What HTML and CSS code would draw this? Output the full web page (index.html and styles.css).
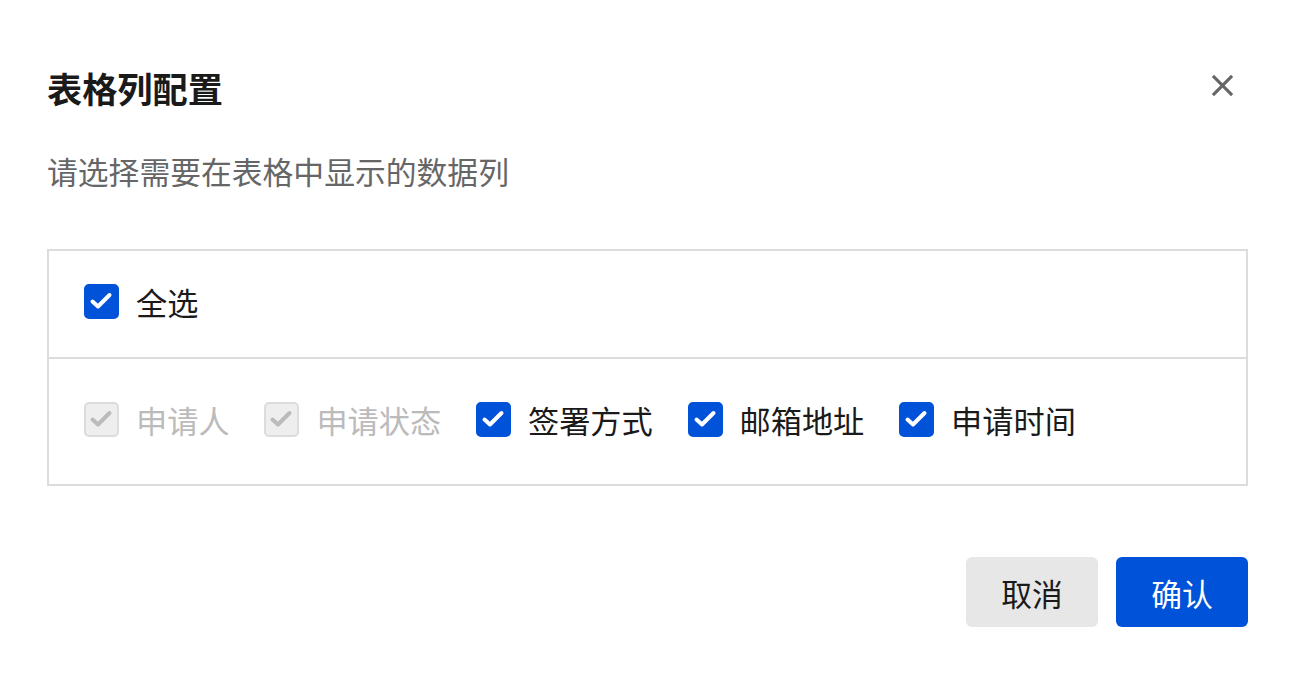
FILE: index.html
```html
<!DOCTYPE html>
<html lang="zh-CN">
<head>
<meta charset="utf-8">
<title>表格列配置</title>
<link rel="stylesheet" href="styles.css">
</head>
<body>
<div class="dialog">
  <div class="header">
    <div class="title">表格列配置</div>
    <button class="close" aria-label="关闭">
      <svg viewBox="0 0 24 24" width="24" height="24"><path d="M2 2 L22 22 M22 2 L2 22" stroke="#666666" stroke-width="3.2" fill="none"/></svg>
    </button>
  </div>
  <div class="desc">请选择需要在表格中显示的数据列</div>
  <div class="panel">
    <div class="row row-all">
      <label class="item">
        <span class="box checked"><svg viewBox="0 0 35 35"><path d="M8.5 17.5 L14 22.5 L25.5 11" /></svg></span>
        <span class="label">全选</span>
      </label>
    </div>
    <div class="row row-cols">
      <label class="item disabled">
        <span class="box"><svg viewBox="0 0 35 35"><path d="M8.5 17.5 L14 22.5 L25.5 11" /></svg></span>
        <span class="label">申请人</span>
      </label>
      <label class="item disabled">
        <span class="box"><svg viewBox="0 0 35 35"><path d="M8.5 17.5 L14 22.5 L25.5 11" /></svg></span>
        <span class="label">申请状态</span>
      </label>
      <label class="item">
        <span class="box checked"><svg viewBox="0 0 35 35"><path d="M8.5 17.5 L14 22.5 L25.5 11" /></svg></span>
        <span class="label">签署方式</span>
      </label>
      <label class="item">
        <span class="box checked"><svg viewBox="0 0 35 35"><path d="M8.5 17.5 L14 22.5 L25.5 11" /></svg></span>
        <span class="label">邮箱地址</span>
      </label>
      <label class="item">
        <span class="box checked"><svg viewBox="0 0 35 35"><path d="M8.5 17.5 L14 22.5 L25.5 11" /></svg></span>
        <span class="label">申请时间</span>
      </label>
    </div>
  </div>
  <div class="footer">
    <button class="btn btn-cancel">取消</button>
    <button class="btn btn-primary">确认</button>
  </div>
</div>
</body>
</html>
```
FILE: styles.css
```css
html, body {
  margin: 0;
  padding: 0;
  background: #ffffff;
}
body {
  font-family: "Noto Sans CJK SC", "Noto Sans", sans-serif;
  color: rgba(0, 0, 0, 0.9);
}
.dialog {
  padding: 61px 55px 0 47px;
}
.header {
  display: flex;
  align-items: center;
  justify-content: space-between;
  height: 53px;
}
.title {
  font-size: 35.2px;
  line-height: 53px;
  font-weight: 700;
  color: #1a1a1a;
}
.close {
  width: 36px;
  height: 36px;
  margin: -4px 8px 0 0;
  padding: 0;
  border: 0;
  background: transparent;
  display: flex;
  align-items: center;
  justify-content: center;
}
.close svg {
  width: 23px;
  height: 23px;
}
.desc {
  margin-top: 33px;
  font-size: 30.8px;
  line-height: 48px;
  color: #666666;
}
.panel {
  margin-top: 54px;
  border: 2px solid #dcdcdc;
}
.row {
  display: flex;
  align-items: center;
  padding: 0 35px;
}
.row-all {
  padding-top: 33px;
  padding-bottom: 38px;
  border-bottom: 2px solid #dcdcdc;
}
.row-cols {
  padding-top: 43px;
  padding-bottom: 47px;
  gap: 34.8px;
}
.item {
  display: flex;
  align-items: center;
  height: 35px;
}
.box {
  width: 35px;
  height: 35px;
  box-sizing: border-box;
  border-radius: 5px;
  background: #eeeeee;
  border: 2px solid #dcdcdc;
  display: flex;
  flex: none;
}
.box svg {
  margin: -2px;
  width: 35px;
  height: 35px;
}
.box path {
  fill: none;
  stroke: #bbbbbb;
  stroke-width: 4;
  stroke-linecap: round;
  stroke-linejoin: round;
}
.box.checked {
  background: #0052d9;
  border-color: #0052d9;
}
.box.checked path {
  stroke: #ffffff;
}
.label {
  margin-left: 17px;
  font-size: 31.2px;
  line-height: 35px;
  color: #1a1a1a;
}
.disabled .label {
  color: #bbbbbb;
}
.footer {
  margin-top: 71px;
  display: flex;
  justify-content: flex-end;
  gap: 18px;
}
.btn {
  width: 132px;
  height: 70px;
  border: 0;
  border-radius: 6px;
  font-family: "Noto Sans CJK SC", "Noto Sans", sans-serif;
  font-size: 30.8px;
  padding: 0;
}
.btn-cancel {
  background: #e7e7e7;
  color: #1a1a1a;
}
.btn-primary {
  background: #0052d9;
  color: #ffffff;
}
```
